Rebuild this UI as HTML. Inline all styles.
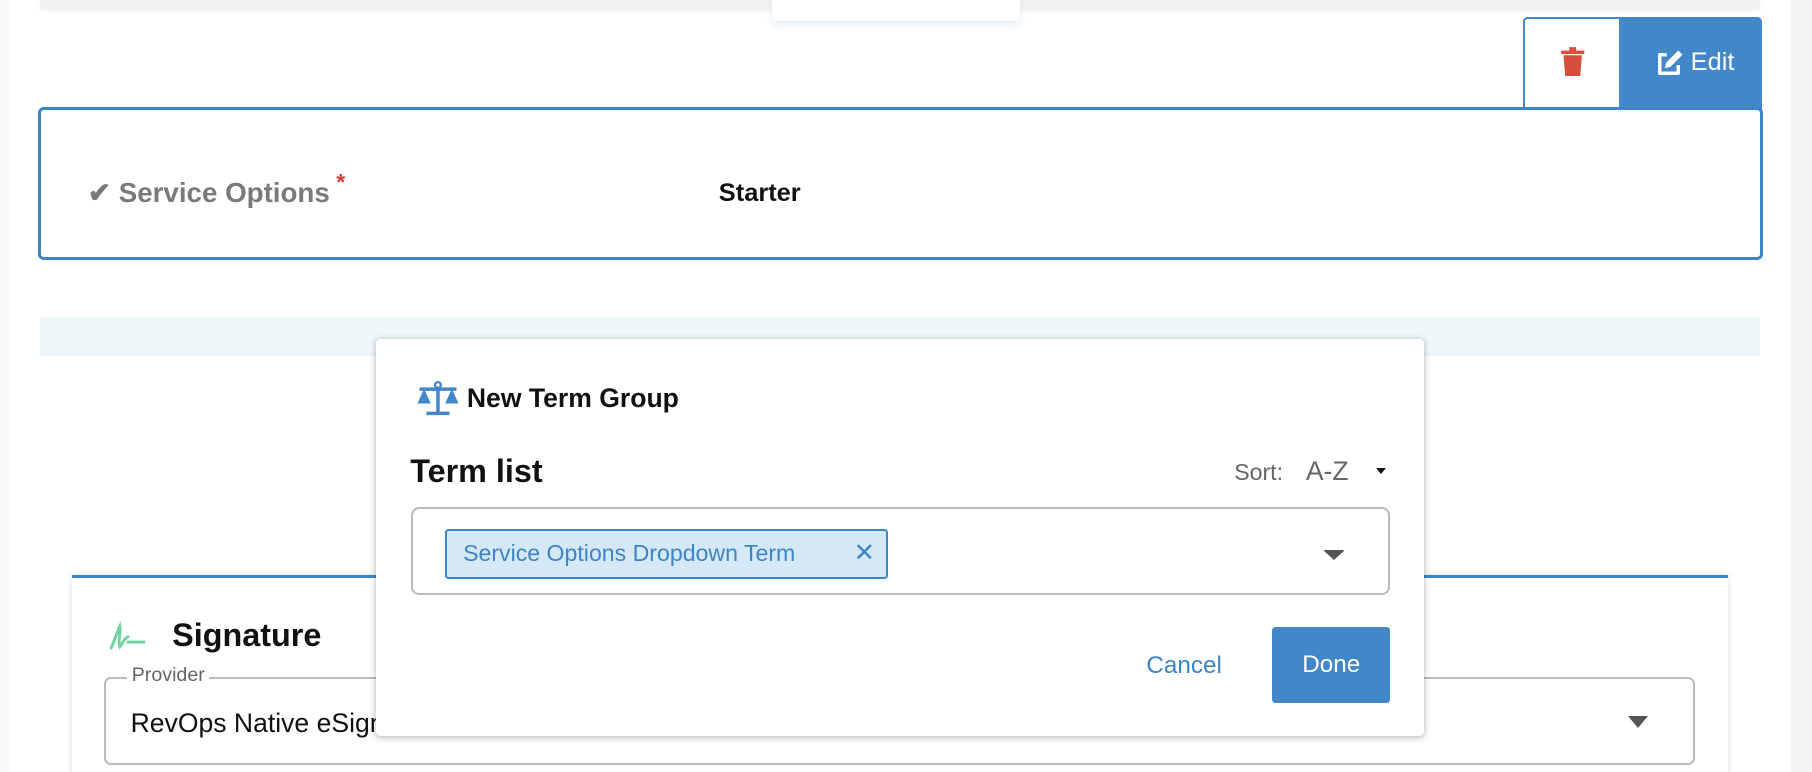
<!DOCTYPE html><html><head><meta charset="utf-8"><style>
*{box-sizing:border-box;margin:0;padding:0}
html,body{width:1812px;height:772px;overflow:hidden;background:#fff;font-family:"Liberation Sans",sans-serif}
#w{zoom:1.15561;width:1568px;height:668px;position:relative}
.a{position:absolute}
</style></head><body><div id="w">
<div class="a" style="left:1550px;top:0;width:18px;height:668px;background:#f5f5f5"></div>
<div class="a" style="left:0;top:0;width:8px;height:668px;background:#fafafa"></div>
<div class="a" style="left:35px;top:0;width:1488px;height:8px;background:#f0f2f4;box-shadow:0 2px 3px rgba(0,0,0,.05)"></div>
<div class="a" style="left:668px;top:0;width:215px;height:18px;background:#fff;border-radius:0 0 4px 4px;box-shadow:0 3px 6px rgba(66,135,200,.15)"></div>
<div class="a" style="left:1318px;top:15px;width:90px;height:80px;background:#fff;border:2px solid #4287c8;border-bottom:none;border-radius:4px 0 0 0"></div>
<svg class="a" style="left:1350px;top:40px" width="22" height="28" viewBox="0 0 22 28"><rect x="1" y="4" width="20" height="3" fill="#d64f3c"/><rect x="8" y="1" width="6" height="4" fill="#d64f3c"/><path d="M3 8h16l-1.5 18h-13z" fill="#d64f3c"/></svg>
<div class="a" style="left:1401px;top:15px;width:124px;height:80px;background:#4287c8;border-radius:0 4px 0 0;color:#fff;font-size:22px;line-height:78px;padding-left:62px">Edit</div>
<svg class="a" style="left:1431px;top:42px" width="26" height="26" viewBox="0 0 26 26" fill="none" stroke="#fff" stroke-width="3"><path d="M11 5H5v16h16v-7" stroke-linejoin="round"/><path d="M10 16l1-4L21 2l3 3-10 10z" fill="#fff" stroke-width="1"/></svg>
<div class="a" style="left:33px;top:93px;width:1493px;height:132px;border:3px solid #3d85c6;border-radius:5px;background:#fff"></div>
<div class="a" style="left:76px;top:152px;font-size:24px;font-weight:bold;color:#7a7a7a">✔ Service Options<span style="color:#e53935;font-size:20px;vertical-align:top;position:relative;top:-6px"> *</span></div>
<div class="a" style="left:622px;top:155px;font-size:22px;font-weight:bold;color:#111">Starter</div>
<div class="a" style="left:35px;top:274px;width:1488px;height:34px;background:#eff7fb"></div>
<div class="a" style="left:62px;top:498px;width:1433px;height:175px;background:#fff;border-top:3px solid #3d85c6;box-shadow:0 0 6px rgba(0,0,0,.12)"></div>
<svg class="a" style="left:92px;top:536px" width="38" height="30" viewBox="0 0 38 30" fill="none" stroke="#6fd3a0" stroke-width="2.5"><path d="M4 26c3-6 6-16 8-20 1 6-2 14 0 18 4-6 6-10 8-8"/><path d="M18 20h16"/></svg>
<div class="a" style="left:149px;top:534px;font-size:28px;font-weight:bold;color:#111">Signature</div>
<div class="a" style="left:90px;top:586px;width:1377px;height:76px;border:2px solid #bbb;border-radius:6px"></div>
<div class="a" style="left:110px;top:575px;font-size:17px;color:#666;background:#fff;padding:0 4px">Provider</div>
<div class="a" style="left:113px;top:613px;font-size:23px;color:#111">RevOps Native eSignature</div>
<div class="a" style="left:1409px;top:620px;width:0;height:0;border-left:9px solid transparent;border-right:9px solid transparent;border-top:11px solid #555"></div>
<div class="a" style="left:325px;top:293px;width:907px;height:344px;background:#fff;border-radius:4px;box-shadow:0 1px 6px rgba(0,0,0,.3)"></div>
<svg class="a" style="left:360px;top:330px" width="38" height="30" viewBox="0 0 38 30" fill="#4287c8" stroke="#4287c8"><circle cx="19" cy="3.5" r="2.5" fill="none" stroke-width="2"/><path d="M3 7h32M19 6v21M9 28h20" stroke-width="3" fill="none"/><path d="M2 19l5-11 5 11zM26 19l5-11 5 11z" stroke-width="1"/></svg>
<div class="a" style="left:404px;top:331px;font-size:23px;font-weight:bold;color:#111">New Term Group</div>
<div class="a" style="left:355px;top:392px;font-size:28px;font-weight:bold;color:#111">Term list</div>
<div class="a" style="left:1068px;top:397px;font-size:20px;color:#666">Sort:</div>
<div class="a" style="left:1130px;top:395px;font-size:23px;color:#666">A-Z</div>
<div class="a" style="left:1191px;top:405px;border-left:5px solid transparent;border-right:5px solid transparent;border-top:6px solid #111"></div>
<div class="a" style="left:356px;top:439px;width:847px;height:76px;border:2px solid #bbb;border-radius:7px"></div>
<div class="a" style="left:385px;top:458px;width:383px;height:43px;background:#d4e8f7;border:2px solid #3d85c6;border-radius:3px;color:#3d85c6;font-size:20px;line-height:39px;padding-left:14px">Service Options Dropdown Term<span style="position:absolute;left:352px;font-size:22px">✕</span></div>
<div class="a" style="left:1145px;top:476px;border-left:10px solid transparent;border-right:10px solid transparent;border-top:9px solid #555;border-radius:2px"></div>
<div class="a" style="left:992px;top:564px;font-size:21px;color:#3d85c6">Cancel</div>
<div class="a" style="left:1101px;top:543px;width:102px;height:65px;background:#4287c8;border-radius:3px;color:#fff;font-size:21px;line-height:65px;text-align:center">Done</div>
</div></body></html>
